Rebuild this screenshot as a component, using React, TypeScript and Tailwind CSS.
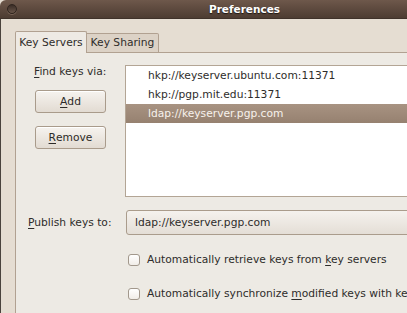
import type React from "react"

const font = { fontFamily: '"DejaVu Sans", "Liberation Sans", sans-serif' }

function U({ children }: { children: React.ReactNode }) {
  return <span className="underline underline-offset-[2px] decoration-[1px]">{children}</span>
}

function Button({ children }: { children: React.ReactNode }) {
  return (
    <div className="w-[71px] h-[23px] flex items-center justify-center rounded-[3px] border border-[#a99b8b] bg-gradient-to-b from-[#f6f3ef] to-[#e2dbd2] text-[#2c2a28] shadow-[inset_0_1px_0_#ffffff]">
      {children}
    </div>
  )
}

function Check({ children }: { children: React.ReactNode }) {
  return (
    <div className="h-[20px] flex items-center pl-[3px] gap-[7px]">
      <div className="w-[12px] h-[12px] rounded-[3px] border border-[#a2988c] bg-gradient-to-b from-[#ffffff] to-[#f1ede8]" />
      <span className="whitespace-nowrap">{children}</span>
    </div>
  )
}

const servers = ["hkp://keyserver.ubuntu.com:11371", "hkp://pgp.mit.edu:11371", "ldap://keyserver.pgp.com"]

export default function App() {
  return (
    <div
      className="w-[407px] h-[313px] overflow-hidden flex flex-col bg-[#e5ddd2] text-[10.7px] leading-[14px] text-[#2e2c2a]"
      style={font}
    >
      <div className="h-[19px] shrink-0 flex items-center rounded-tl-[6px] bg-gradient-to-b from-[#6e584b] to-[#4d3c32] border-b border-[#3f322a] relative">
        <div className="ml-[7px] w-[10px] h-[10px] rounded-full bg-gradient-to-b from-[#3a2d26] to-[#6a564a] border border-[#2f241e] shadow-[0_1px_0_#7a6558]" />
        <div className="ml-[192px] font-bold text-[10.5px] text-white [text-shadow:0_1px_1px_#1e1612]">Preferences</div>
      </div>
      <div className="flex-1 flex border-l border-[#4a433d]">
        <div className="flex-1 flex flex-col pl-[14px] pt-[12px]">
          <div className="flex items-end h-[22px] -mb-px relative z-10">
            <div className="h-[22px] w-[72px] flex items-center justify-center border border-b-0 border-[#b1a191] rounded-t-[2px] bg-[#eeeae4]">
              Key Servers
            </div>
            <div className="h-[20px] w-[72px] flex items-center justify-center border border-l-0 border-[#b1a191] rounded-tr-[2px] bg-[#dcd2c6]">
              Key Sharing
            </div>
          </div>
          <div className="flex-1 border-l border-t border-[#b1a191] bg-[#edeae4] flex flex-col pt-[12px]">
            <div className="flex">
              <div className="w-[109px] shrink-0 flex flex-col pl-[18px]">
                <div>
                  <U>F</U>ind keys via:
                </div>
                <div className="mt-[11px] ml-px">
                  <Button>
                    <U>A</U>dd
                  </Button>
                </div>
                <div className="mt-[13px] ml-px">
                  <Button>
                    <U>R</U>emove
                  </Button>
                </div>
              </div>
              <div className="w-[320px] shrink-0 h-[132px] border border-[#b3a595] bg-white flex flex-col">
                {servers.map((s, i) => (
                  <div
                    key={s}
                    className={
                      i === 2
                        ? "h-[19px] flex items-center pl-[22px] whitespace-nowrap text-[#f7f2ec] bg-gradient-to-b from-[#a89382] to-[#968170]"
                        : "h-[19px] flex items-center pl-[22px] whitespace-nowrap"
                    }
                  >
                    {s}
                  </div>
                ))}
              </div>
            </div>
            <div className="flex items-center mt-[13px]">
              <div className="w-[110px] shrink-0 pl-[12px] whitespace-nowrap">
                <U>P</U>ublish keys to:
              </div>
              <div className="w-[320px] shrink-0 h-[25px] flex items-center pl-[8px] rounded-[3px] border border-[#aa9c8c] bg-gradient-to-b from-[#f5f2ee] to-[#e4ded6]">
                ldap://keyserver.pgp.com
              </div>
            </div>
            <div className="pl-[109px] mt-[15px] flex flex-col gap-[14px]">
              <Check>
                Automatically retrieve keys from <U>k</U>ey servers
              </Check>
              <Check>
                Automatically synchronize <U>m</U>odified keys with key servers
              </Check>
            </div>
          </div>
        </div>
      </div>
    </div>
  )
}
